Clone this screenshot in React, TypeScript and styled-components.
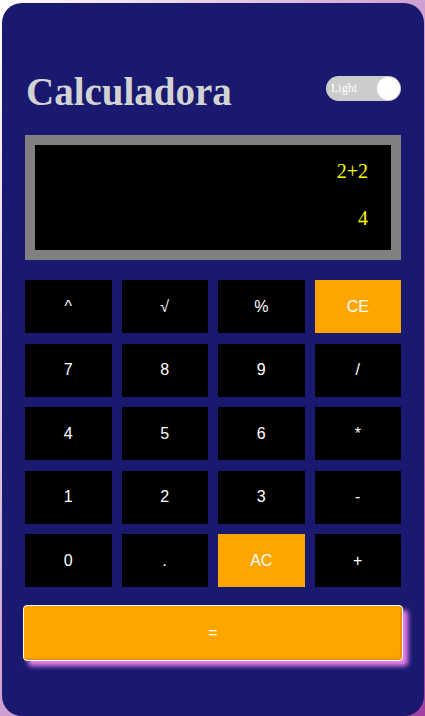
import styled, { createGlobalStyle } from 'styled-components';

const GlobalStyle = createGlobalStyle`
  html, body {
    margin: 0;
    padding: 0;
  }
  body {
    min-height: 100vh;
    background: linear-gradient(to bottom right, #ffffff, #a040a0);
    font-family: "Liberation Serif", "Times New Roman", serif;
  }
`;

const Card = styled.div`
  box-sizing: border-box;
  width: 422px;
  height: 713px;
  margin: 3px 0 0 2px;
  padding: 66px 21px 0 21px;
  background: #191970;
  border-radius: 20px;
  display: flex;
  flex-direction: column;
`;

const Header = styled.div`
  display: flex;
  align-items: center;
  justify-content: space-between;
  padding: 0 2px 0 3px;
`;

const Title = styled.h1`
  margin: 0;
  font-family: "Liberation Serif", "Times New Roman", serif;
  font-size: 39px;
  font-weight: bold;
  color: #d3d3d3;
  line-height: 46px;
`;

const Toggle = styled.div`
  position: relative;
  box-sizing: border-box;
  width: 75px;
  height: 25px;
  margin-top: -7px;
  border-radius: 13px;
  background: #cccccc;
  display: flex;
  align-items: center;
  padding: 0 0 0 5px;
`;

const ToggleLabel = styled.span`
  font-family: "Liberation Serif", "Times New Roman", serif;
  font-size: 12px;
  color: #ffffff;
`;

const Knob = styled.span`
  position: absolute;
  right: 1px;
  top: 1px;
  width: 23px;
  height: 23px;
  border-radius: 50%;
  background: #ffffff;
`;

const Display = styled.div`
  box-sizing: border-box;
  margin: 20px 2px 0 2px;
  height: 125px;
  border: 10px solid #808080;
  background: #000000;
  padding: 15px 23px 0 0;
  display: flex;
  flex-direction: column;
  align-items: flex-end;
  gap: 24px;
  font-family: "Liberation Serif", "Times New Roman", serif;
  font-size: 20px;
  line-height: 23px;
  color: #ffff00;
`;

const Keys = styled.div`
  display: grid;
  grid-template-columns: repeat(4, 1fr);
  grid-auto-rows: 53px;
  gap: 10.5px 10px;
  margin: 20px 2px 0 2px;
`;

const Key = styled.button<{ $accent?: boolean }>`
  border: none;
  border-radius: 0;
  padding: 0;
  background: ${p => (p.$accent ? '#ffa500' : '#000000')};
  color: #ffffff;
  font-family: "Liberation Sans", Arial, sans-serif;
  font-size: 16px;
`;

const Equals = styled.button`
  box-sizing: border-box;
  margin-top: 18px;
  height: 56px;
  width: 380px;
  border: 1px solid #ffffff;
  border-radius: 4px;
  background: #ffa500;
  box-shadow: inset -2px -2px 0 #e89600, 5px 5px 5px #ee82ee;
  color: #ffffff;
  font-family: "Liberation Sans", Arial, sans-serif;
  font-size: 16px;
`;

const keys: { label: string; accent?: boolean }[] = [
  { label: '^' }, { label: '√' }, { label: '%' }, { label: 'CE', accent: true },
  { label: '7' }, { label: '8' }, { label: '9' }, { label: '/' },
  { label: '4' }, { label: '5' }, { label: '6' }, { label: '*' },
  { label: '1' }, { label: '2' }, { label: '3' }, { label: '-' },
  { label: '0' }, { label: '.' }, { label: 'AC', accent: true }, { label: '+' },
];

export default function App() {
  return (
    <>
      <GlobalStyle />
      <Card>
        <Header>
          <Title>Calculadora</Title>
          <Toggle>
            <ToggleLabel>Light</ToggleLabel>
            <Knob />
          </Toggle>
        </Header>
        <Display>
          <div>2+2</div>
          <div>4</div>
        </Display>
        <Keys>
          {keys.map(k => (
            <Key key={k.label} $accent={k.accent}>{k.label}</Key>
          ))}
        </Keys>
        <Equals>=</Equals>
      </Card>
    </>
  );
}
